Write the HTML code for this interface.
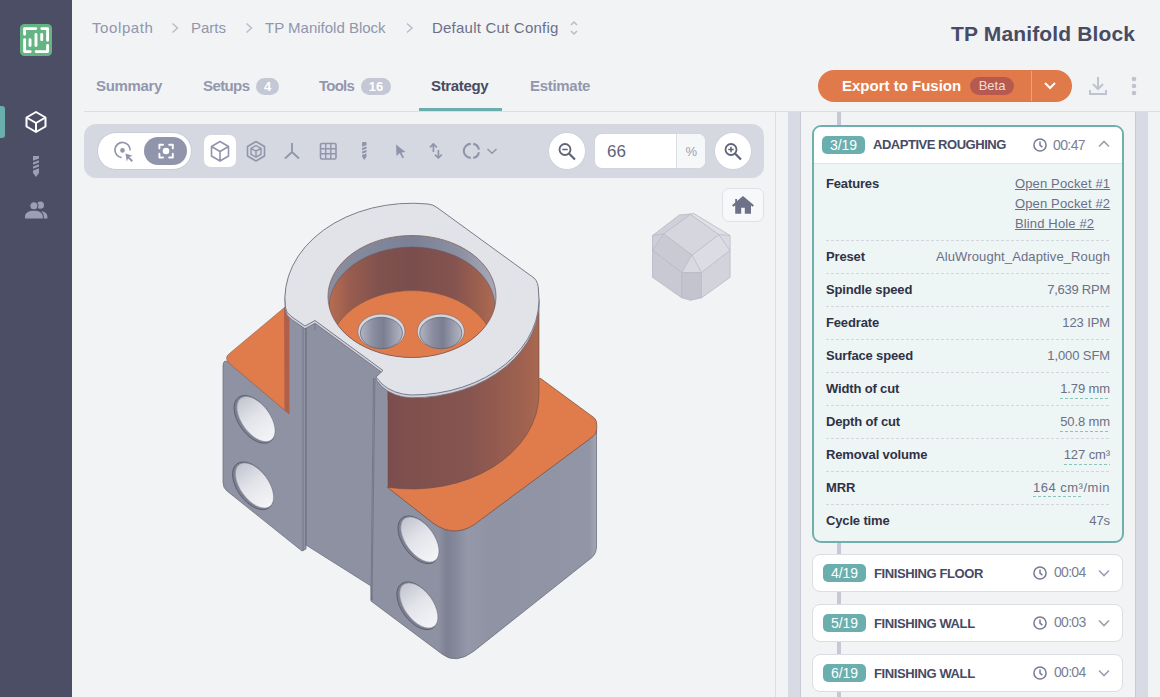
<!DOCTYPE html>
<html><head><meta charset="utf-8">
<style>
*{box-sizing:border-box;margin:0;padding:0}
html,body{width:1160px;height:697px;overflow:hidden;background:#f2f3f5;font-family:"Liberation Sans",sans-serif}
.a{position:absolute;white-space:pre}
#side{position:absolute;left:0;top:0;width:72px;height:697px;background:#4b4e65}
.bc{font-size:15px;color:#9096ad;top:19px;line-height:18px}
.tab{font-size:15px;font-weight:700;color:#9297ae;top:77px;line-height:18px}
.badge{position:absolute;height:17px;border-radius:9px;background:#c4c7d4;color:#fff;font-size:13px;font-weight:700;text-align:center;line-height:17px}
.lbl{position:absolute;left:826px;font-size:13px;font-weight:700;color:#2f3246;line-height:16px;white-space:pre;letter-spacing:-0.15px}
.val{position:absolute;right:50px;font-size:13px;color:#6b7087;line-height:16px;white-space:pre;text-align:right;letter-spacing:-0.1px}
.dash{position:absolute;left:826px;width:284px;height:1px;background:linear-gradient(to right,#d3d6de 3px,transparent 3px) 0 0/5px 1px repeat-x}
.lnk{text-decoration:underline;text-underline-offset:1px}
.dv{background:linear-gradient(to right,#8cc2be 3px,transparent 3px) 0 100%/5px 1px repeat-x;padding-bottom:2px}
.card{position:absolute;left:812px;width:311px;border:1px solid #dcdee6;border-radius:8px;background:#fff}
.sbadge{position:absolute;left:10px;width:43px;height:18px;border-radius:5px;background:#6aaead;color:#fff;font-size:14px;line-height:18px;text-align:center}
.stitle{position:absolute;left:61px;font-size:13px;font-weight:700;color:#474b63;line-height:16px;white-space:pre;letter-spacing:-0.39px}
.stime{position:absolute;left:241px;font-size:14px;color:#7a7f95;line-height:16px;letter-spacing:-0.7px}
</style></head><body>
<div id="side">
  <!-- logo -->
  <svg class="a" style="left:20px;top:24px" width="32" height="32" viewBox="0 0 32 32">
    <rect x="0" y="0" width="32" height="32" rx="4.5" fill="#64b484"/>
    <g fill="none" stroke="#fff" stroke-width="2.9" stroke-linecap="round" stroke-linejoin="round">
      <path d="M4.6 10.2 V4.6 H15.8"/><path d="M21.8 4.6 H27.6 V16.2"/>
      <path d="M4.6 15.8 V27.6 H10.2"/><path d="M16.1 27.6 H27.6 V21.5"/>
      <path d="M10.05 15.8 V21.6"/><path d="M15.95 10.4 V21.6"/><path d="M21.7 10.4 V15.8"/>
    </g>
  </svg>
  <div class="a" style="left:0;top:106px;width:5px;height:32px;background:#6aafae;border-radius:0 3px 3px 0"></div>
  <svg class="a" style="left:24px;top:110px" width="24" height="24" viewBox="0 0 24 24" fill="none" stroke="#fff" stroke-width="2" stroke-linejoin="round">
    <path d="M12 2 L21.5 7.5 V16.5 L12 22 L2.5 16.5 V7.5 Z"/><path d="M2.5 7.5 L12 13 L21.5 7.5 M12 13 V22"/>
  </svg>
  <svg class="a" style="left:30px;top:154px" width="12" height="24" viewBox="0 0 12 24">
    <path d="M3 2 h6 v17 l-3 4 l-3 -4 Z" fill="#9a9fb5"/>
    <path d="M2 8 L10 5 M2 12 L10 9 M2 16 L10 13" stroke="#4b4d63" stroke-width="1.6"/>
  </svg>
  <svg class="a" style="left:23px;top:198px" width="26" height="22" viewBox="0 0 26 22" fill="#9a9fb5">
    <circle cx="17.4" cy="7.2" r="3.6"/><path d="M18.3 13.2 C22 13.7 24.4 15.5 24.4 18.5 V20.4 H20.8 V18.5 C20.8 16.5 20 14.6 18.3 13.2 Z"/>
    <circle cx="10.9" cy="7.8" r="4.1" stroke="#4b4e65" stroke-width="1.1"/>
    <path d="M2 20.4 V18.6 C2 14.6 6 12.7 10.9 12.7 C15.8 12.7 19.8 14.6 19.8 18.6 V20.4 Z"/>
  </svg>
</div>

<!-- breadcrumb -->
<div class="a bc" style="left:92px;letter-spacing:0.6px">Toolpath</div>
<div class="a bc" style="left:191px">Parts</div>
<div class="a bc" style="left:265px">TP Manifold Block</div>
<div class="a bc" style="left:432px;color:#6b7088;letter-spacing:0.22px">Default Cut Config</div>
<svg class="a" style="left:0;top:0" width="600" height="50" fill="none" stroke="#b9bdcb" stroke-width="1.5">
  <path d="M172.5 23.5 L177.5 28 L172.5 32.5"/><path d="M246.5 23.5 L251.5 28 L246.5 32.5"/><path d="M407 23.5 L412 28 L407 32.5"/>
  <path d="M571 25 L574 22 L577 25 M571 31 L574 34 L577 31"/>
</svg>
<div class="a" style="left:951px;top:22px;font-size:21px;font-weight:700;color:#474b63;line-height:24px;letter-spacing:0.15px">TP Manifold Block</div>

<!-- tabs -->
<div class="a tab" style="left:96px;letter-spacing:-0.33px">Summary</div>
<div class="a tab" style="left:203px;letter-spacing:-0.6px">Setups</div>
<div class="badge" style="left:256px;top:78px;width:23px">4</div>
<div class="a tab" style="left:319px;letter-spacing:-0.75px">Tools</div>
<div class="badge" style="left:361px;top:78px;width:30px">16</div>
<div class="a tab" style="left:431px;color:#474b63;letter-spacing:-0.33px">Strategy</div>
<div class="a tab" style="left:530px;letter-spacing:-0.3px">Estimate</div>
<div class="a" style="left:84px;top:111px;width:1076px;height:1px;background:#dcdee6"></div>
<div class="a" style="left:419px;top:108px;width:83px;height:3px;background:#6aaead"></div>

<!-- export -->
<div class="a" style="left:818px;top:70px;width:254px;height:32px;border-radius:16px;background:#e07a4a"></div>
<div class="a" style="left:842px;top:77px;font-size:15px;font-weight:700;color:#fff;line-height:18px">Export to Fusion</div>
<div class="a" style="left:970px;top:77px;width:44px;height:18px;border-radius:9px;background:#b65a4f;color:#f3dcd5;font-size:13px;line-height:18px;text-align:center">Beta</div>
<div class="a" style="left:1031px;top:71px;width:1px;height:30px;background:#eaa27f"></div>
<svg class="a" style="left:1043px;top:80px" width="14" height="12" fill="none" stroke="#fff" stroke-width="2"><path d="M2 3 L7 8 L12 3"/></svg>
<svg class="a" style="left:1087px;top:74px" width="22" height="24" fill="none" stroke="#bfc2cf" stroke-width="2"><path d="M11 3 V15 M6 10 L11 15 L16 10 M3 16 V20 H19 V16"/></svg>
<svg class="a" style="left:1129px;top:76px" width="10" height="20" fill="#bfc2cf"><circle cx="5" cy="3" r="2.3"/><circle cx="5" cy="10" r="2.3"/><circle cx="5" cy="17" r="2.3"/></svg>


<!-- model -->
<svg class="a" style="left:0;top:0" width="776" height="697" viewBox="0 0 776 697">
<defs>
  <linearGradient id="gWall" x1="388" y1="0" x2="539" y2="0" gradientUnits="userSpaceOnUse">
    <stop offset="0" stop-color="#7b4e4d"/><stop offset="0.55" stop-color="#875550"/><stop offset="0.9" stop-color="#a0624f"/><stop offset="1" stop-color="#a9684f"/>
  </linearGradient>
  <linearGradient id="gBore" x1="329" y1="0" x2="495" y2="0" gradientUnits="userSpaceOnUse">
    <stop offset="0" stop-color="#b86d50"/><stop offset="0.12" stop-color="#9a5d4f"/><stop offset="0.3" stop-color="#80524e"/><stop offset="0.5" stop-color="#7a4e4d"/><stop offset="0.75" stop-color="#84534f"/><stop offset="0.92" stop-color="#a0624f"/><stop offset="1" stop-color="#b06a51"/>
  </linearGradient>
  <linearGradient id="gCres" x1="328" y1="0" x2="496" y2="0" gradientUnits="userSpaceOnUse">
    <stop offset="0" stop-color="#8a8ea0"/><stop offset="0.5" stop-color="#7c8095"/><stop offset="0.8" stop-color="#8d91a3"/><stop offset="1" stop-color="#a7aab9"/>
  </linearGradient>
  <linearGradient id="gHole" x1="0" y1="0" x2="1" y2="0">
    <stop offset="0" stop-color="#b0b3c1"/><stop offset="0.3" stop-color="#8b8ea0"/><stop offset="0.55" stop-color="#7a7e91"/><stop offset="1" stop-color="#b3b6c3"/>
  </linearGradient>
  <linearGradient id="gSideHole" x1="0" y1="0" x2="0" y2="1">
    <stop offset="0" stop-color="#c3c5d0"/><stop offset="0.45" stop-color="#e3e4ea"/><stop offset="1" stop-color="#f5f5f8"/>
  </linearGradient>
  <linearGradient id="gRight" x1="371" y1="0" x2="596" y2="0" gradientUnits="userSpaceOnUse">
    <stop offset="0" stop-color="#8e91a2"/><stop offset="0.3" stop-color="#8e91a2"/><stop offset="0.335" stop-color="#7e8193"/><stop offset="0.37" stop-color="#84879a"/><stop offset="0.43" stop-color="#9598a8"/><stop offset="0.52" stop-color="#9093a3"/><stop offset="0.97" stop-color="#9295a5"/><stop offset="1" stop-color="#a3a6b4"/>
  </linearGradient>
  <clipPath id="cbore"><ellipse cx="412" cy="296.5" rx="84" ry="61"/></clipPath>
  <clipPath id="cinner"><ellipse cx="412" cy="307.6" rx="83" ry="60.5"/></clipPath>
</defs>
<g stroke-linejoin="round">
  <!-- right block faces -->
  <path d="M374 377 L388 388 L388 487 L433 523 Q457 540.5 481 519.5 L593 436.5 Q596.5 434 596.5 430 L596.5 547 Q596 555 590 559 L474 651 Q456 665 442 654 L371 601 Z" fill="url(#gRight)" stroke="#6a6d7d" stroke-width="0.8"/>
  <!-- right block top -->
  <path d="M387 487 L387 400 L540 378 L594.4 418 Q597 420.5 596.8 426 L596.6 430 Q596.5 434 593 436.5 L481 519.5 Q457 540.5 433 523 Z" fill="#e07b4c"/>
  <path d="M540 378 L594.4 418 Q597 420.5 596.8 426 L596.6 430 Q596.5 434 593 436.5 L481 519.5 Q457 540.5 433 523 L387 487" fill="none" stroke="#7d5548" stroke-width="0.8"/>
  <!-- left block left face + boss side -->
  <path d="M223 366 Q223 358 230 363 L287 411 L287 309 L303 318 L306 326 L306 549 L302 551 L227 491 Q223 488 223 482 Z" fill="#8f92a3" stroke="#6f7282" stroke-width="0.8"/>
  <!-- left block top -->
  <path d="M285 307 L230 353 Q223 358 230 364 L289 414 L289 316 Z" fill="#e07b4c" stroke="#7d5548" stroke-width="0.5"/>
  <path d="M284 307 L289 316 L289 414 L284.5 410 Z" fill="#b0604a"/>
  <!-- key face -->
  <path d="M306 326 L315 321 L383 370 L375 377 L372 600 L371 586 L306 545 Z" fill="#8e91a2" stroke="#6f7282" stroke-width="0.8"/>
  <path d="M303 318 L303 551 M306 326 L306 546 M315 321 L315 330" stroke="#6f7282" stroke-width="0.8" fill="none"/>
  <path d="M373.5 378 L371 600" stroke="#6f7282" stroke-width="0.8"/>
  <!-- cylinder wall -->
  <path d="M388 380 L539 300 L539 393.5 A127 95.5 0 0 1 388 487.3 Z" fill="url(#gWall)" stroke="#6e4a44" stroke-width="0.6"/>
  
  <!-- cap side band -->
  <path d="M285.5 308 A127 95.5 0 0 1 428 204 Q433 204.5 437 207.5 L534 278 Q538.5 282 538.5 291 A127 95.5 0 0 1 411 395 Q393 394 382 384 L376 377 L383 370.5 L315 320.5 L305 326 L292 317 Q286 313 285.5 308 Z" transform="translate(0 2.8)" fill="#cfd0d9" stroke="#6d6f7e" stroke-width="0.8"/>
  <!-- cap top -->
  <path d="M285.5 308 A127 95.5 0 0 1 428 204 Q433 204.5 437 207.5 L534 278 Q538.5 282 538.5 291 A127 95.5 0 0 1 411 395 Q393 394 382 384 L376 377 L383 370.5 L315 320.5 L305 326 L292 317 Q286 313 285.5 308 Z" fill="#e2e3e9" stroke="#6d6f7e" stroke-width="0.9"/>
  <!-- bore -->
  <g clip-path="url(#cbore)">
    <ellipse cx="412" cy="296.5" rx="84" ry="61" fill="url(#gCres)"/>
    <ellipse cx="412" cy="307.6" rx="83" ry="60.5" fill="url(#gBore)" stroke="#5f5a66" stroke-width="0.6"/>
    <g clip-path="url(#cinner)">
      <ellipse cx="412" cy="351.1" rx="83" ry="60.5" fill="#e07b4c" stroke="#7d5548" stroke-width="0.6"/>
    </g>
  </g>
  <ellipse cx="412" cy="296.5" rx="84" ry="61" fill="none" stroke="#7a5a55" stroke-width="0.8"/>
  <!-- floor holes -->
  <ellipse cx="381.4" cy="331.4" rx="23.6" ry="17.4" fill="#d3d5de" stroke="#8b6a60" stroke-width="0.7"/>
  <ellipse cx="381.4" cy="333" rx="21" ry="15.7" fill="url(#gHole)" stroke="#5d6070" stroke-width="0.7"/>
  <ellipse cx="440.8" cy="331.4" rx="23.6" ry="17.4" fill="#d3d5de" stroke="#8b6a60" stroke-width="0.7"/>
  <ellipse cx="440.8" cy="333" rx="21" ry="15.7" fill="url(#gHole)" stroke="#5d6070" stroke-width="0.7"/>
  <!-- side holes -->
  <g transform="translate(254.5 419.4) rotate(-36)">
    <ellipse rx="15.7" ry="27.2" fill="#7d8091" stroke="#565968" stroke-width="0.8"/>
    <ellipse cx="1.4" cy="0.6" rx="14.2" ry="25.9" fill="url(#gSideHole)" stroke="#8d90a0" stroke-width="0.5"/>
  </g>
  <g transform="translate(253 485.8) rotate(-36)">
    <ellipse rx="15.7" ry="27.2" fill="#7d8091" stroke="#565968" stroke-width="0.8"/>
    <ellipse cx="1.4" cy="0.6" rx="14.2" ry="25.9" fill="url(#gSideHole)" stroke="#8d90a0" stroke-width="0.5"/>
  </g>
  <g transform="translate(418.4 539.8) rotate(-36)">
    <ellipse rx="15.7" ry="27.2" fill="#7d8091" stroke="#565968" stroke-width="0.8"/>
    <ellipse cx="1.4" cy="0.6" rx="14.2" ry="25.9" fill="url(#gSideHole)" stroke="#8d90a0" stroke-width="0.5"/>
  </g>
  <g transform="translate(417.3 605.8) rotate(-36)">
    <ellipse rx="15.7" ry="27.2" fill="#7d8091" stroke="#565968" stroke-width="0.8"/>
    <ellipse cx="1.4" cy="0.6" rx="14.2" ry="25.9" fill="url(#gSideHole)" stroke="#8d90a0" stroke-width="0.5"/>
  </g>
</g>
<!-- nav cube -->
<g stroke="#b3b5c3" stroke-width="0.5" stroke-linejoin="round">
  <path d="M652.6 235.5 L679.4 215 L693.6 213.4 L730 235.5 L730 277.3 L701.5 297.8 L690.5 300.2 L681.8 297.8 L652.6 277.3 Z" fill="#d3d4dd"/>
  <path d="M652.6 235.5 L679.4 215 L690.5 214.5 L663.7 233.9 Z" fill="#cfd0d8"/>
  <path d="M693.6 213.4 L730 235.5 L718.9 234.7 L690.5 214.5 Z" fill="#dfe0e6"/>
  <path d="M663.7 233.9 L690.5 214.5 L718.9 234.7 L692 255.2 Z" fill="#d5d6de"/>
  <path d="M652.6 235.5 L663.7 233.9 L652.6 250.5 Z" fill="#cdced7"/>
  <path d="M652.6 250.5 L663.7 233.9 L692 255.2 L681.8 272.6 Z" fill="#c9cad3"/>
  <path d="M730 235.5 L730 250.5 L718.9 234.7 Z" fill="#dadbe2"/>
  <path d="M692 255.2 L718.9 234.7 L730 250.5 L701.5 272.6 Z" fill="#dcdde4"/>
  <path d="M681.8 272.6 L692 255.2 L701.5 272.6 Z" fill="#d8d9e1"/>
  <path d="M652.6 250.5 L681.8 272.6 L681.8 297.8 L652.6 277.3 Z" fill="#c8c9d3"/>
  <path d="M681.8 272.6 L701.5 272.6 L701.5 297.8 L690.5 300.2 L681.8 297.8 Z" fill="#c3c4ce"/>
  <path d="M701.5 272.6 L730 250.5 L730 277.3 L701.5 297.8 Z" fill="#d2d3db"/>
</g>
</svg>

<!-- toolbar -->
<div class="a" style="left:84px;top:124px;width:680px;height:54px;border-radius:12px;background:#d6d8e1"></div>
<div class="a" style="left:96.5px;top:132px;width:95px;height:38px;border-radius:19px;background:#fff;border:1px solid #c9cbd6"></div>
<div class="a" style="left:144px;top:137px;width:43px;height:28px;border-radius:14px;background:#9195ab"></div>
<svg class="a" style="left:112px;top:140px" width="24" height="22" fill="none" stroke="#9195ab" stroke-width="1.8">
  <path d="M18.1 10.4 A7.6 7.6 0 1 0 9.6 17.6" stroke-width="1.7"/><circle cx="10.5" cy="10.4" r="2.3" fill="#9195ab" stroke="none"/>
  <path d="M13.4 13.4 L20.6 15.8 L17.4 17.1 L21 20.6 L19.7 21.9 L16.1 18.4 L14.8 21.4 Z" fill="#9195ab" stroke="none"/>
</svg>
<svg class="a" style="left:155px;top:140px" width="22" height="22" fill="none" stroke="#fff" stroke-width="1.8">
  <path d="M4.4 8.4 V4.7 H8 M14.2 4.7 H17.8 V8.4 M17.8 13.8 V17.5 H14.2 M8 17.5 H4.4 V13.8" stroke-width="1.9" stroke-linecap="round" stroke-linejoin="round"/><circle cx="11" cy="11" r="3.3" fill="#fff" stroke="none"/>
</svg>
<div class="a" style="left:204px;top:135px;width:32px;height:32px;border-radius:7px;background:#fff"></div>
<svg class="a" style="left:0;top:0" width="780" height="200" fill="none" stroke="#9195ab" stroke-width="1.6" stroke-linejoin="round">
  <path d="M220 141.5 L228.5 146.5 V156 L220 161 L211.5 156 V146.5 Z M211.5 146.5 L220 151.5 L228.5 146.5 M220 151.5 V161"/>
  <path d="M256 141.5 L264.5 146.5 V156 L256 161 L247.5 156 V146.5 Z"/>
  <path d="M256 145.5 L261 148.3 V154.3 L256 157.2 L251 154.3 V148.3 Z M251 148.3 L256 151.2 L261 148.3 M256 151.2 V157.2" stroke-width="1.4"/>
  <path d="M292 143 V152 M292 152 L285 158.5 M292 152 L299 158.5" stroke-width="1.8"/>
  <rect x="320.5" y="143.5" width="15.5" height="15.5" rx="1.5" stroke-width="1.6"/>
  <path d="M325.7 143.5 V159 M330.8 143.5 V159 M320.5 148.7 H336 M320.5 153.8 H336" stroke-width="1.4"/>
  <path d="M433.4 152 V144 M430 147.3 L433.4 143.9 L436.8 147.3 M438.4 150 V158 M435 154.6 L438.4 158 L441.8 154.6" stroke-width="1.7"/>
  <path d="M473.2 143.9 A7 7 0 0 1 478.9 149.6 M478.9 152.2 A7 7 0 0 1 473.2 157.9 M470.8 157.9 A7 7 0 0 1 470.8 143.9" stroke-width="2.1"/>
  <path d="M487.5 149 L492 153.3 L496.5 149" stroke-width="1.5"/>
</svg>
<svg class="a" style="left:361.7px;top:141.8px" width="5" height="18" fill="#9195ab">
  <path d="M0.1 0.8 Q0.1 0 0.9 0 H3.7 Q4.5 0 4.5 0.8 V14.8 L2.3 17.9 L0.1 14.8 Z"/>
  <path d="M-0.5 5.6 L5 3.6 M-0.5 9.1 L5 7.1 M-0.5 12.6 L5 10.6" stroke="#d6d8e1" stroke-width="1.1"/>
</svg>
<svg class="a" style="left:395px;top:144px" width="12" height="15" fill="#9195ab"><path d="M1 0.5 L10.5 8 L6.5 8.5 L9 13.5 L7.3 14.3 L4.8 9.3 L1.5 12 Z"/></svg>
<div class="a" style="left:549px;top:133px;width:36px;height:36px;border-radius:18px;background:#fff;box-shadow:0 0 0 1px #cfd1db"></div>
<div class="a" style="left:715px;top:133px;width:36px;height:36px;border-radius:18px;background:#fff;box-shadow:0 0 0 1px #cfd1db"></div>
<svg class="a" style="left:0;top:0" width="780" height="200" fill="none" stroke="#5f6379" stroke-width="1.8">
  <circle cx="565" cy="149.5" r="5.5"/><path d="M569 153.5 L575 159.5" stroke-width="2.2"/><path d="M562.3 149.5 H567.7" stroke-width="1.5"/>
  <circle cx="731" cy="149.5" r="5.5"/><path d="M735 153.5 L741 159.5" stroke-width="2.2"/><path d="M728.3 149.5 H733.7 M731 146.8 V152.2" stroke-width="1.5"/>
</svg>
<div class="a" style="left:595px;top:134px;width:110px;height:34px;border-radius:7px;background:#fff;overflow:hidden;box-shadow:0 0 0 1px #d3d5de">
  <div class="a" style="left:81px;top:0;width:29px;height:34px;background:#f6f7f9;border-left:1px solid #dcdee6"></div>
</div>
<div class="a" style="left:607px;top:141px;font-size:17px;color:#5f6379;line-height:22px">66</div>
<div class="a" style="left:685.5px;top:143.5px;font-size:13px;color:#9a9fb2;line-height:16px">%</div>
<div class="a" style="left:722px;top:188px;width:42px;height:34px;border-radius:7px;background:#f7f8fa;border:1px solid #dfe1e8"></div>
<svg class="a" style="left:731px;top:195px" width="24" height="20" fill="#6e7289"><path d="M12 1 L23 10.3 L21.7 11.8 L20 10.4 V18.8 H13.8 V12.8 H10.2 V18.8 H4.2 V10.4 L2.3 11.8 L1 10.3 L4.2 7.6 V4 H6 V6.1 Z"/></svg>

<!-- viewer divider -->
<div class="a" style="left:775px;top:112px;width:1px;height:585px;background:#dcdee6"></div>

<!-- right panel bands -->
<div class="a" style="left:788px;top:112px;width:13px;height:585px;background:#d9dbe4;border-right:1px solid #c8cad6"></div>
<div class="a" style="left:1135px;top:112px;width:13px;height:585px;background:#d9dbe4;border-left:1px solid #c8cad6"></div>
<div class="a" style="left:837px;top:112px;width:4px;height:585px;background:#c6c8d4"></div>

<!-- card 1 -->
<div class="a" style="left:812px;top:125px;width:311.5px;height:418px;border:2px solid #6fb0ae;border-radius:9px;background:#eef5f5;overflow:hidden">
  <div class="a" style="left:0;top:0;width:308px;height:37px;background:#fff;border-bottom:1px solid #dde3e6"></div>
</div>
<div class="a" style="left:822px;top:136px;width:43px;height:18px;border-radius:5px;background:#6aaead;color:#fff;font-size:14px;line-height:18px;text-align:center">3/19</div>
<div class="a" style="left:873px;top:137px;font-size:13px;font-weight:700;color:#474b63;line-height:16px;letter-spacing:-0.47px">ADAPTIVE ROUGHING</div>


<svg class="a" style="left:1032px;top:137px" width="16" height="16" fill="none" stroke="#767b90" stroke-width="1.5"><circle cx="8" cy="8" r="6.1"/><path d="M8 4.6 V8.2 L10.4 10.1"/></svg>
<div class="a" style="left:1053px;top:137px;font-size:14px;color:#7a7f95;line-height:16px;letter-spacing:-0.6px">00:47</div>
<svg class="a" style="left:1097px;top:139px" width="14" height="10" fill="none" stroke="#9a9fb2" stroke-width="1.6"><path d="M2 7.5 L7 2.5 L12 7.5"/></svg>
<div class="lbl" style="top:176px">Features</div>
<div class="a lnk" style="left:1015px;top:176px;font-size:13px;color:#6b7087;line-height:16px;letter-spacing:0.14px">Open Pocket #1</div>
<div class="a lnk" style="left:1015px;top:196px;font-size:13px;color:#6b7087;line-height:16px;letter-spacing:0.14px">Open Pocket #2</div>
<div class="a lnk" style="left:1015px;top:216px;font-size:13px;color:#6b7087;line-height:16px;letter-spacing:0.14px">Blind Hole #2</div>
<div class="dash" style="top:240px"></div>
<div class="lbl" style="top:249px">Preset</div>
<div class="val" style="top:249px;letter-spacing:0.12px">AluWrought_Adaptive_Rough</div>
<div class="dash" style="top:273px"></div>
<div class="lbl" style="top:282px">Spindle speed</div>
<div class="val" style="top:282px;letter-spacing:-0.25px">7,639 RPM</div>
<div class="dash" style="top:306px"></div>
<div class="lbl" style="top:315px">Feedrate</div>
<div class="val" style="top:315px">123 IPM</div>
<div class="dash" style="top:339px"></div>
<div class="lbl" style="top:348px">Surface speed</div>
<div class="val" style="top:348px">1,000 SFM</div>
<div class="dash" style="top:372px"></div>
<div class="lbl" style="top:381px">Width of cut</div>
<div class="val dv" style="top:381px">1.79 mm</div>
<div class="dash" style="top:405px"></div>
<div class="lbl" style="top:414px">Depth of cut</div>
<div class="val dv" style="top:414px">50.8 mm</div>
<div class="dash" style="top:438px"></div>
<div class="lbl" style="top:447px">Removal volume</div>
<div class="val dv" style="top:447px">127 cm³</div>
<div class="dash" style="top:471px"></div>
<div class="lbl" style="top:480px">MRR</div>
<div class="val" style="top:480px;letter-spacing:0.5px"><span class="dv">164 cm³</span>/min</div>
<div class="dash" style="top:504px"></div>
<div class="lbl" style="top:513px">Cycle time</div>
<div class="val" style="top:513px">47s</div>
<div class="card" style="top:554px;height:38px">
  <div class="sbadge" style="top:9px">4/19</div>
  <div class="stitle" style="top:11px">FINISHING FLOOR</div>
  <svg class="a" style="left:219px;top:10px" width="16" height="16" fill="none" stroke="#767b90" stroke-width="1.5"><circle cx="8" cy="8" r="6.1"/><path d="M8 4.6 V8.2 L10.4 10.1"/></svg>
  <div class="stime" style="top:9px">00:04</div>
  <svg class="a" style="left:284px;top:13px" width="14" height="10" fill="none" stroke="#9a9fb2" stroke-width="1.6"><path d="M2 2.5 L7 7.5 L12 2.5"/></svg>
</div>
<div class="card" style="top:604px;height:38px">
  <div class="sbadge" style="top:9px">5/19</div>
  <div class="stitle" style="top:11px">FINISHING WALL</div>
  <svg class="a" style="left:219px;top:10px" width="16" height="16" fill="none" stroke="#767b90" stroke-width="1.5"><circle cx="8" cy="8" r="6.1"/><path d="M8 4.6 V8.2 L10.4 10.1"/></svg>
  <div class="stime" style="top:9px">00:03</div>
  <svg class="a" style="left:284px;top:13px" width="14" height="10" fill="none" stroke="#9a9fb2" stroke-width="1.6"><path d="M2 2.5 L7 7.5 L12 2.5"/></svg>
</div>
<div class="card" style="top:654px;height:38px">
  <div class="sbadge" style="top:9px">6/19</div>
  <div class="stitle" style="top:11px">FINISHING WALL</div>
  <svg class="a" style="left:219px;top:10px" width="16" height="16" fill="none" stroke="#767b90" stroke-width="1.5"><circle cx="8" cy="8" r="6.1"/><path d="M8 4.6 V8.2 L10.4 10.1"/></svg>
  <div class="stime" style="top:9px">00:04</div>
  <svg class="a" style="left:284px;top:13px" width="14" height="10" fill="none" stroke="#9a9fb2" stroke-width="1.6"><path d="M2 2.5 L7 7.5 L12 2.5"/></svg>
</div>
</body></html>
